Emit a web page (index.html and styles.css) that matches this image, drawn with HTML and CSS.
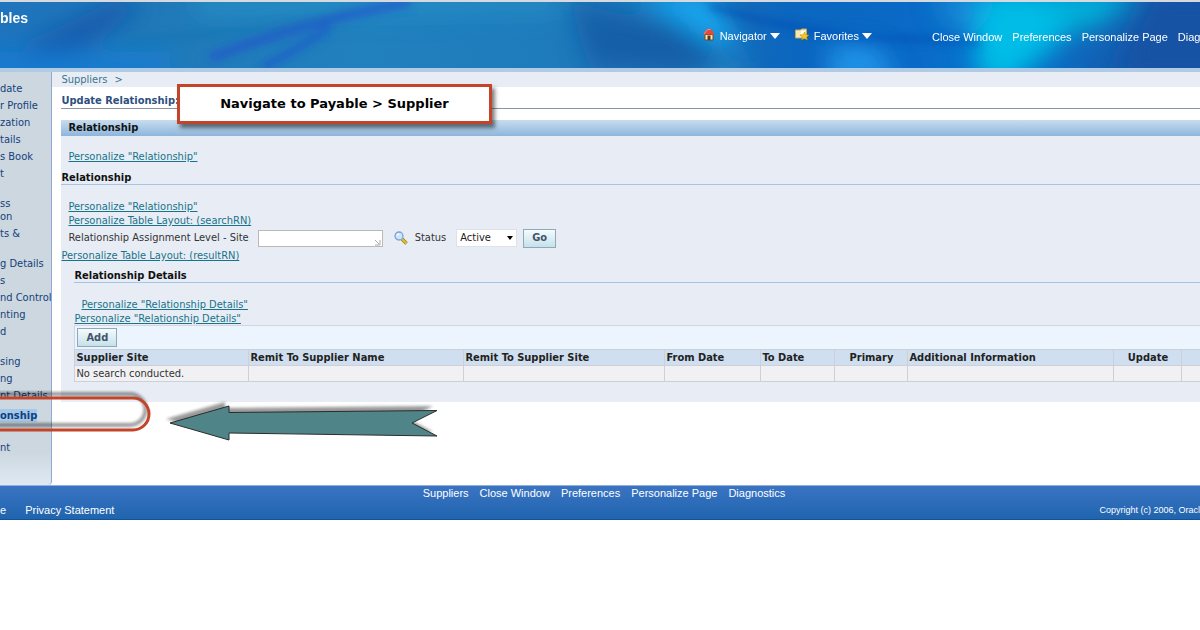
FILE: index.html
```html
<!DOCTYPE html>
<html lang="en">
<head>
<meta charset="utf-8">
<title>Update Relationship</title>
<link rel="stylesheet" href="styles.css">
</head>
<body>
<header class="banner">
  <svg class="banner-art" viewBox="0 0 1200 66" preserveAspectRatio="none" aria-hidden="true">
    <defs>
      <linearGradient id="base" x1="0" x2="1" y1="0" y2="0">
        <stop offset="0" stop-color="#1f74bd"/><stop offset=".12" stop-color="#2179b8"/><stop offset=".3" stop-color="#2180be"/><stop offset=".45" stop-color="#1f7cbc"/><stop offset=".58" stop-color="#1c6fb6"/><stop offset=".66" stop-color="#0b66bf"/><stop offset=".76" stop-color="#0a6ac6"/><stop offset=".84" stop-color="#0479cf"/><stop offset=".92" stop-color="#1361b5"/><stop offset="1" stop-color="#1557a9"/>
      </linearGradient>
      <filter id="soft" x="-50%" y="-50%" width="200%" height="200%"><feGaussianBlur stdDeviation="12"/></filter>
      <filter id="fine" x="-50%" y="-50%" width="200%" height="200%"><feGaussianBlur stdDeviation="4"/></filter>
    </defs>
    <rect width="1200" height="66" fill="url(#base)"/>
    <g filter="url(#soft)">
      <path d="M30 40L110 0H150L80 50L20 60Z" fill="#0e4fa8" opacity=".7"/>
      <path d="M-20 50H170V80H-20Z" fill="#167fdc" opacity=".7"/>
      <path d="M190 -10H560V10L200 14Z" fill="#2a97cb" opacity=".6"/>
      <path d="M570 0L700 30L740 66H590Z" fill="#1556a0" opacity=".7"/>
      <path d="M630 -10H710L740 45H715Z" fill="#12a5ee"/>
      <path d="M720 60H745V90H680Z" fill="#2286c4"/>
      <path d="M970 -10H1140L1070 30L1010 80H980Z" fill="#00bde6"/>
      <path d="M1030 0H1130L1090 30Z" fill="#00add4"/>
      <path d="M830 45H875L900 80H830Z" fill="#2396ea"/>
      <path d="M930 -5H1000L960 30Z" fill="#2394dd" opacity=".7"/>
      <path d="M1150 -10H1230V80H1110Z" fill="#1553a4"/>
    </g>
    <g filter="url(#fine)" fill="none">
      <path d="M210 56Q310 18 410 0" stroke="#2059ca" stroke-width="9" opacity=".8"/>
      <path d="M262 66Q310 40 330 25" stroke="#2059ca" stroke-width="8" opacity=".7"/>
      <path d="M130 38Q270 30 350 8" stroke="#1c6cab" stroke-width="3" opacity=".5"/>
      <path d="M710 4Q800 32 890 36T980 42" stroke="#064ab4" stroke-width="5" opacity=".7"/>
    </g>
  </svg>
  <strong class="brand">bles</strong>
  <nav class="menus" aria-label="Menus">
    <button class="menu" type="button">
      <svg width="12" height="13" viewBox="0 0 12 13"><path d="M2 6.500h8V12H2z" fill="#f8e7b4" stroke="#6e4a22"/><path d="M0 6.500L4 1h4l4 5.500z" fill="#e8493c"/><path d="M1 6L4.500 1.500h3" fill="none" stroke="#f58a78"/><path d="M4.500 7.500h3V12h-3z" fill="#6b3418"/></svg>
      Navigator <i class="caret"></i>
    </button>
    <button class="menu" type="button">
      <svg width="14" height="13" viewBox="0 0 14 13"><path d="M.5 2h5l1-1h5v9H.5z" fill="#f8e8b4" stroke="#c3a75c"/><path d="M6 3h4v4H6z" fill="#fffdf0"/><path d="M9.500 4l1.300 2.700 3.100.3-2.300 2 .8 3-2.900-1.600L6.700 12l.7-3L5 7l3.200-.3z" fill="#f7cb15" stroke="#b98606" stroke-width=".5"/></svg>
      Favorites <i class="caret"></i>
    </button>
  </nav>
  <nav class="global" aria-label="Global">
    <a href="#">Close Window</a><a href="#">Preferences</a><a href="#">Personalize Page</a><a href="#">Diag</a>
  </nav>
</header>

<div class="body">
  <nav class="side" aria-label="Supplier">
    <ul>
      <li><a href="#">date</a></li>
      <li><a href="#">r Profile</a></li>
      <li><a href="#">zation</a></li>
      <li><a href="#">tails</a></li>
      <li><a href="#">s Book</a></li>
      <li><a href="#">t<br>&nbsp;</a></li>
      <li><a href="#">ss<br>on</a></li>
      <li><a href="#">ts &amp;<br>&nbsp;</a></li>
      <li><a href="#">g Details</a></li>
      <li><a href="#">s</a></li>
      <li><a href="#">nd Control</a></li>
      <li><a href="#">nting</a></li>
      <li><a href="#">d<br>&nbsp;</a></li>
      <li><a href="#">sing</a></li>
      <li><a href="#">ng</a></li>
      <li><a href="#">nt Details</a></li>
      <li class="tall"><a class="current" href="#" aria-current="page">onship</a></li>
      <li><a href="#">nt</a></li>
    </ul>
  </nav>

  <main class="main">
    <div class="crumbs"><a href="#">Suppliers</a><span>&gt;</span></div>
    <h1 class="title">Update Relationship:</h1>
    <section class="panel">
      <h2 class="panel-head">Relationship</h2>
      <div class="panel-body">
        <a class="plink inset" href="#">Personalize "Relationship"</a>
        <h3 class="sub">Relationship</h3>
        <a class="plink inset" href="#">Personalize "Relationship"</a>
        <a class="plink inset" href="#">Personalize Table Layout: (searchRN)</a>
        <form class="search">
          <label for="site">Relationship Assignment Level - Site</label>
          <span class="lov">
            <input id="site" type="text">
            <svg width="7" height="7" viewBox="0 0 7 7"><path d="M1 1l4 4M6 1v5H1" fill="none" stroke="#aaa"/></svg>
          </span>
          <button class="glass" type="button" aria-label="Search for site">
            <svg width="14" height="14" viewBox="0 0 14 14"><path d="M8 8l4.500 4.500" stroke="#8c7a1e" stroke-width="3.400"/><path d="M8 8l4.500 4.500" stroke="#e6c32c" stroke-width="2"/><circle cx="5" cy="5" r="4" fill="#cfe6fa" stroke="#7ba4d8" stroke-width="1.300"/><path d="M3 4.500Q3.500 3 5 2.800" fill="none" stroke="#fff" stroke-width="1.200"/></svg>
          </button>
          <label for="status">Status</label>
          <span class="pick">
            <select id="status"><option>Active</option><option>Inactive</option></select>
            <i class="tick"></i>
          </span>
          <button class="btn" type="button">Go</button>
        </form>
        <a class="plink" href="#">Personalize Table Layout: (resultRN)</a>
        <section class="details">
          <h3 class="sub">Relationship Details</h3>
          <a class="plink inset" href="#">Personalize "Relationship Details"</a>
          <a class="plink" href="#">Personalize "Relationship Details"</a>
          <div class="toolbar"><button class="btn" type="button">Add</button></div>
          <table class="grid">
            <colgroup><col class="w-site"><col class="w-name"><col class="w-remit"><col class="w-from"><col class="w-to"><col class="w-primary"><col class="w-info"><col class="w-update"><col></colgroup>
            <thead><tr><th>Supplier Site</th><th>Remit To Supplier Name</th><th>Remit To Supplier Site</th><th>From Date</th><th>To Date</th><th class="mid">Primary</th><th>Additional Information</th><th class="mid">Update</th><th></th></tr></thead>
            <tbody><tr><td>No search conducted.</td><td></td><td></td><td></td><td></td><td></td><td></td><td></td><td></td></tr></tbody>
          </table>
        </section>
      </div>
    </section>
  </main>
</div>

<footer class="footer">
  <nav class="foot-links" aria-label="Footer">
    <a href="#">Suppliers</a><a href="#">Close Window</a><a href="#">Preferences</a><a href="#">Personalize Page</a><a href="#">Diagnostics</a>
  </nav>
  <div class="legal">
    <a href="#">e</a><a href="#">Privacy Statement</a>
    <small>Copyright (c) 2006, Oracl</small>
  </div>
</footer>

<div class="callout">Navigate to Payable &gt; Supplier</div>
<svg class="marks" width="460" height="60" viewBox="0 0 460 60" aria-hidden="true">
  <defs><filter id="cast" x="-20%" y="-40%" width="140%" height="180%"><feGaussianBlur stdDeviation="1.500"/></filter></defs>
  <g filter="url(#cast)" opacity=".4">
    <path d="M-10 4H130A15.500 15.500 0 0 1 130 35H-10" fill="none" stroke="#000" stroke-width="4"/>
    <path d="M166 29L225 12V18L433 16L409 29L433 42L225 39V46Z"/>
  </g>
  <path d="M-10 8H133A16 16 0 0 1 133 40H-10" fill="none" stroke="#c4442a" stroke-width="3"/>
  <path d="M170 33L229 16V22.500L437 20.500L412 33L437 46L229 43V50Z" fill="#4f8589" stroke="#2c2c2c"/>
</svg>
</body>
</html>
```
FILE: styles.css
```css
* { box-sizing: border-box; }
body {
  margin: 0;
  position: relative;
  overflow-x: hidden;
  background: #fff;
  color: #333;
  font: 11px/14px "DejaVu Sans Condensed", "DejaVu Sans", sans-serif;
}
h1, h2, h3, ul { margin: 0; padding: 0; font-size: 11px; }
a { text-decoration: none; color: inherit; white-space: nowrap; }
button { font: inherit; cursor: pointer; }

.banner {
  position: relative;
  display: flex;
  height: 72px;
  border-top: 2px solid #d6dade;
  border-bottom: 4px solid #b1cbe4;
  color: #fff;
  font-family: "Liberation Sans", Arial, sans-serif;
  overflow: hidden;
}
.banner-art { position: absolute; inset: 0; width: 100%; height: 100%; }
.banner > :not(.banner-art) { position: relative; }
.brand { font-size: 14px; padding-top: 9px; }
.menus { display: flex; gap: 15px; margin-left: auto; padding-top: 25px; align-items: flex-start; }
.menu { display: flex; align-items: center; gap: 5px; height: 18px; padding: 0; border: 0; background: none; color: #fff; }
.menu svg { margin-bottom: 3px; }
.caret { border: 5px solid transparent; border-top: 6px solid #fff; border-bottom: 0; margin-left: -2px; }
.global { display: flex; gap: 10px; width: 268px; margin-left: 60px; padding-top: 28px; }

.body { display: flex; min-height: 413px; }
.side {
  flex: 0 0 52px;
  padding-top: 8px;
  color: #123f7c;
  background: linear-gradient(#cdd7df 92%, #dfe9f4);
  border-right: 1px solid #8fabd0;
  border-bottom-right-radius: 4px;
}
.side ul { list-style: none; line-height: 13px; }
.side li { padding: 2px 0; }
.side .tall { padding: 5px 0 17px; }
.current { font-weight: bold; background: #a3c8ea; }

.main { flex: 1; min-width: 0; }
.crumbs { display: flex; gap: 7px; padding-left: 9px; background: #e8edf5; color: #35768e; line-height: 15px; }
.title {
  margin: 6px 0 11px 9px;
  border-bottom: 1px solid #8b93a5;
  color: #2d5080;
  line-height: 15px;
}
.panel { margin-left: 9px; background: #e8edf5; padding-bottom: 20px; }
.panel-head { padding-left: 7px; line-height: 16px; color: #111; background: linear-gradient(#c8dcee, #8db6dc); }
.panel-body { display: flex; flex-direction: column; align-items: flex-start; padding-top: 14px; }
.plink { color: #17738a; text-decoration: underline; }
.inset { margin-left: 7px; }
.sub { align-self: stretch; margin: 7px 0 15px; border-bottom: 1px solid #a5c5e4; color: #111; line-height: 13px; }
.search { display: flex; align-items: center; margin: 1px 0 2px 7px; height: 18px; }
.lov { position: relative; width: 125px; height: 17px; margin: 0 11px 0 9px; }
.lov input { display: block; width: 100%; height: 17px; border: 1px solid #b9b9b9; background: #fff; padding: 0 9px 0 2px; font: inherit; }
.lov svg { position: absolute; right: 2px; bottom: 1px; }
.glass { display: flex; padding: 0; border: 0; background: none; margin-right: 7px; }
.pick { position: relative; margin: 0 6px 0 10px; }
.pick select { appearance: none; display: block; width: 61px; height: 18px; border: 1px solid #dde1e8; background: #fff; color: #222; font: inherit; padding: 0 12px 0 3px; }
.tick { position: absolute; right: 4px; top: 7px; border: 3px solid transparent; border-top: 4px solid #000; border-bottom: 0; pointer-events: none; }
.btn {
  height: 19px;
  padding: 0 8px;
  border: 1px solid #93a7bb;
  background: linear-gradient(#f4fbfc, #c4e2ea);
  color: #45536a;
  font-weight: bold;
  line-height: 14px;
}
.details { display: flex; flex-direction: column; align-items: flex-start; align-self: stretch; margin-left: 13px; }
.details .sub { margin-top: 6px; }
.toolbar { align-self: stretch; height: 24px; margin-top: -1px; padding: 2px 0 0 2px; background: #ecf4fe; border: 1px solid #d2d6de; border-width: 1px 0 0 1px; }
.grid { table-layout: fixed; width: 100%; border-collapse: collapse; }
.grid th, .grid td { height: 16px; padding: 0 1px; border: 1px solid #cdd0d9; border-right: 0; text-align: left; line-height: 15px; overflow: hidden; white-space: nowrap; }
.grid th { background: #cfdfef; color: #222; }
.grid td { background: #f1f1f4; }
.grid .mid { text-align: center; }
.w-site { width: 174px; }
.w-name { width: 215px; }
.w-remit { width: 201px; }
.w-from { width: 96px; }
.w-to { width: 74px; }
.w-primary { width: 73px; }
.w-info { width: 206px; }
.w-update { width: 68px; }

.footer {
  height: 35px;
  border-top: 1px solid #8fb2da;
  border-bottom: 1px solid #14539b;
  background: linear-gradient(#3a74c3, #2064ae);
  color: #fff;
  font-family: "Liberation Sans", Arial, sans-serif;
}
.foot-links { display: flex; justify-content: center; gap: 11px; padding-left: 8px; }
.legal { display: flex; gap: 19px; padding-top: 3px; }
.legal small { margin-left: auto; white-space: nowrap; font-size: 9px; line-height: 14px; }

.callout {
  position: absolute;
  left: 177px;
  top: 84px;
  width: 315px;
  border: 3px solid #c4442a;
  background: #fff;
  box-shadow: 3px 4px 4px rgba(0, 0, 0, .5);
  color: #000;
  font: bold 13px/34px "DejaVu Sans", sans-serif;
  text-align: center;
}
.marks { position: absolute; left: 0; top: 390px; pointer-events: none; }
```
